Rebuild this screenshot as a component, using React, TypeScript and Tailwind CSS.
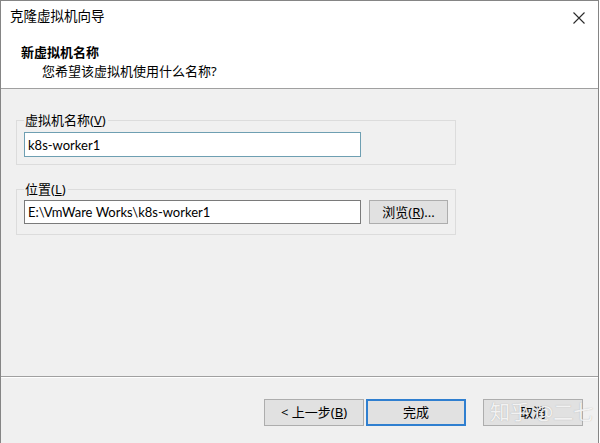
import React from "react";

const font = { fontFamily: '"Noto Sans", "Noto Sans CJK SC", sans-serif' };
const inputFont = { fontFamily: 'Lato, "Noto Sans CJK SC", sans-serif' };

const WinButton = ({
  children,
  isDefault = false,
}: {
  children: React.ReactNode;
  isDefault?: boolean;
}) => (
  <button
    className={
      "flex h-[27px] w-[100px] items-center justify-center bg-[#e1e1e1] text-[13px] leading-none text-black " +
      (isDefault ? "border-2 border-[#2f7fd0]" : "border border-[#adadad]")
    }
  >
    {children}
  </button>
);

export default function App() {
  return (
    <div
      className="relative flex h-[443px] w-[599px] flex-col border-l border-r border-t border-[#858585] bg-[#f0f0f0] text-black"
      style={font}
    >
      {/* title bar */}
      <div className="flex h-[30px] items-center justify-between bg-white pl-[9px] pr-[13px] pt-[2px]">
        <span className="text-[13.5px] leading-none">克隆虚拟机向导</span>
        <svg width="12" height="12" viewBox="0 0 12 12" className="mt-[1px]">
          <path d="M0.5 0.5 L11.5 11.5 M11.5 0.5 L0.5 11.5" stroke="#2b2b2b" strokeWidth="1.1" />
        </svg>
      </div>

      {/* header */}
      <div className="h-[58px] border-b border-[#a0a0a0] bg-white pl-[20px] pt-[12px]">
        <div className="text-[13px] font-bold leading-[18px]">新虚拟机名称</div>
        <div className="pl-[21px] text-[13px] leading-[20px]">您希望该虚拟机使用什么名称?</div>
      </div>

      {/* body */}
      <div className="flex-1 pl-[15px] pt-[22px]">
        <fieldset className="w-[440px] border border-[#dcdcdc] px-[7px] pb-[7px]">
          <legend className="pl-[1px] pr-[2px] text-[13px] leading-[18px]">
            虚拟机名称(<span className="underline">V</span>)
          </legend>
          <input
            readOnly
            defaultValue="k8s-worker1"
            className="mt-[3px] block h-[25px] w-[337px] border border-[#6e9fb2] bg-white pl-[3px] text-[13px] outline-none"
            style={inputFont}
          />
        </fieldset>

        <fieldset className="mt-[15px] w-[440px] border border-[#dcdcdc] px-[7px] pb-[10px]">
          <legend className="pl-[1px] pr-[2px] text-[13px] leading-[18px]">
            位置(<span className="underline">L</span>)
          </legend>
          <div className="mt-[2px] flex items-start gap-[8px]">
            <input
              readOnly
              defaultValue="E:\VmWare Works\k8s-worker1"
              className="block h-[24px] w-[337px] border border-[#7a7a7a] bg-white pl-[3px] text-[13px] outline-none"
              style={inputFont}
            />
            <button className="flex h-[24px] w-[79px] items-center justify-center border border-[#adadad] bg-[#e1e1e1] text-[13px] leading-none">
              浏览(<span className="underline">R</span>)...
            </button>
          </div>
        </fieldset>
      </div>

      {/* footer */}
      <div className="flex h-[67px] justify-end border-t border-[#a0a0a0] pr-[15px] pt-[22px] shadow-[inset_0_1px_0_#ffffff]">
        <div className="flex items-start">
          <WinButton>
            &lt; 上一步(<span className="underline">B</span>)
          </WinButton>
          <div className="ml-[2px]">
            <WinButton isDefault>完成</WinButton>
          </div>
          <div className="ml-[17px]">
            <WinButton>取消</WinButton>
          </div>
        </div>
      </div>

      {/* watermark */}
      <div className="pointer-events-none absolute left-[489px] top-[402px] whitespace-nowrap text-[20px] leading-none text-white/85 [text-shadow:0_0_1px_rgba(120,120,120,0.6)]">
        知乎 @二七
      </div>
    </div>
  );
}
